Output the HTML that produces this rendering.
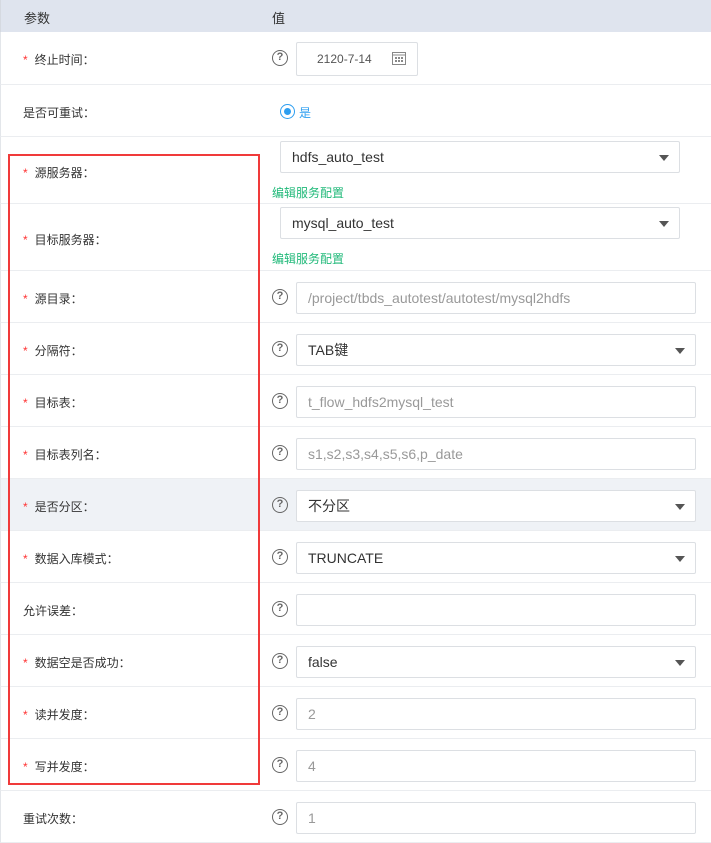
<!DOCTYPE html>
<html><head><meta charset="utf-8"><style>
*{box-sizing:border-box;margin:0;padding:0}
body{width:711px;height:841px;overflow:hidden;background:#fff;font-family:"Liberation Sans","Noto Sans CJK SC",sans-serif;font-size:12px;color:#333;position:relative}
.hd{position:absolute;left:0;top:0;width:711px;height:32px;background:#dfe4ee;border-left:1px solid #d5d9e0}
.hd span{position:absolute;top:8px;font-size:13px}
.row{position:absolute;left:0;width:711px;border-bottom:1px solid #ebedf0;border-left:1px solid #e3e6ea}
.lab{position:absolute;left:22px;font-size:12px;color:#333}
.lab i{color:#f33;font-style:normal;margin-right:7px}
.q{position:absolute;left:271px;width:16px;height:16px;border:1.6px solid #666;border-radius:50%;font-size:11px;font-weight:bold;color:#666;text-align:center;line-height:13px}
.in{position:absolute;left:295px;width:400px;height:32px;border:1px solid #dcdfe3;border-radius:2px;padding-left:11px;line-height:30px;font-size:14px;color:#999}
.in.v{color:#333}
.tri{position:absolute;right:10px;top:13px;width:0;height:0;border-left:5px solid transparent;border-right:5px solid transparent;border-top:6px solid #555}
.lnk{position:absolute;left:271px;color:#20b979;font-size:12px}
</style></head><body>
<div class="hd"><span style="left:23px">参数</span><span style="left:271px">值</span></div>

<div class="row" style="top:32px;height:53px"><div class="lab" style="top:19px"><i>*</i>终止时间：</div><div class="q" style="top:18px">?</div>
<div class="in v" style="top:10px;width:122px;height:34px;padding-left:20px;line-height:32px;font-size:12px;color:#555">2120-7-14
<svg style="position:absolute;left:94px;top:7px" width="16" height="16" viewBox="0 0 16 16"><rect x="1.5" y="2.5" width="13" height="12" fill="none" stroke="#888"/><line x1="1.5" y1="5" x2="14.5" y2="5" stroke="#888"/><g fill="#888"><rect x="4" y="7" width="2" height="2"/><rect x="7" y="7" width="2" height="2"/><rect x="10" y="7" width="2" height="2"/><rect x="4" y="10" width="2" height="2"/><rect x="7" y="10" width="2" height="2"/><rect x="10" y="10" width="2" height="2"/></g></svg></div></div>

<div class="row" style="top:85px;height:52px"><div class="lab" style="top:19px">是否可重试：</div>
<div style="position:absolute;left:279px;top:19px;width:15px;height:15px;border:1.5px solid #2d9ef0;border-radius:50%"><div style="position:absolute;left:2.5px;top:2.5px;width:7px;height:7px;border-radius:50%;background:#2d9ef0"></div></div>
<span style="position:absolute;left:298px;top:19px;color:#2d9ef0">是</span></div>

<div class="row" style="top:137px;height:67px"><div class="lab" style="top:27px"><i>*</i>源服务器：</div>
<div class="in v" style="left:279px;top:4px;height:32px">hdfs_auto_test<div class="tri"></div></div><div class="lnk" style="top:47px">编辑服务配置</div></div>

<div class="row" style="top:204px;height:67px"><div class="lab" style="top:27px"><i>*</i>目标服务器：</div>
<div class="in v" style="left:279px;top:3px;height:32px">mysql_auto_test<div class="tri"></div></div><div class="lnk" style="top:46px">编辑服务配置</div></div>

<div class="row" style="top:271px;height:52px"><div class="lab" style="top:19px"><i>*</i>源目录：</div><div class="q" style="top:18px">?</div><div class="in" style="top:11px">/project/tbds_autotest/autotest/mysql2hdfs</div></div>
<div class="row" style="top:323px;height:52px"><div class="lab" style="top:19px"><i>*</i>分隔符：</div><div class="q" style="top:18px">?</div><div class="in v" style="top:11px">TAB键<div class="tri"></div></div></div>
<div class="row" style="top:375px;height:52px"><div class="lab" style="top:19px"><i>*</i>目标表：</div><div class="q" style="top:18px">?</div><div class="in" style="top:11px">t_flow_hdfs2mysql_test</div></div>
<div class="row" style="top:427px;height:52px"><div class="lab" style="top:19px"><i>*</i>目标表列名：</div><div class="q" style="top:18px">?</div><div class="in" style="top:11px">s1,s2,s3,s4,s5,s6,p_date</div></div>
<div class="row" style="top:479px;height:52px;background:#eff2f6"><div class="lab" style="top:19px"><i>*</i>是否分区：</div><div class="q" style="top:18px">?</div><div class="in v" style="top:11px;background:#fff">不分区<div class="tri"></div></div></div>
<div class="row" style="top:531px;height:52px"><div class="lab" style="top:19px"><i>*</i>数据入库模式：</div><div class="q" style="top:18px">?</div><div class="in v" style="top:11px">TRUNCATE<div class="tri"></div></div></div>
<div class="row" style="top:583px;height:52px"><div class="lab" style="top:19px">允许误差：</div><div class="q" style="top:18px">?</div><div class="in" style="top:11px"></div></div>
<div class="row" style="top:635px;height:52px"><div class="lab" style="top:19px"><i>*</i>数据空是否成功：</div><div class="q" style="top:18px">?</div><div class="in v" style="top:11px">false<div class="tri"></div></div></div>
<div class="row" style="top:687px;height:52px"><div class="lab" style="top:19px"><i>*</i>读并发度：</div><div class="q" style="top:18px">?</div><div class="in" style="top:11px">2</div></div>
<div class="row" style="top:739px;height:52px"><div class="lab" style="top:19px"><i>*</i>写并发度：</div><div class="q" style="top:18px">?</div><div class="in" style="top:11px">4</div></div>
<div class="row" style="top:791px;height:52px"><div class="lab" style="top:19px">重试次数：</div><div class="q" style="top:18px">?</div><div class="in" style="top:11px">1</div></div>

<div style="position:absolute;left:8px;top:154px;width:252px;height:631px;border:2px solid #f03a3a"></div>
</body></html>
